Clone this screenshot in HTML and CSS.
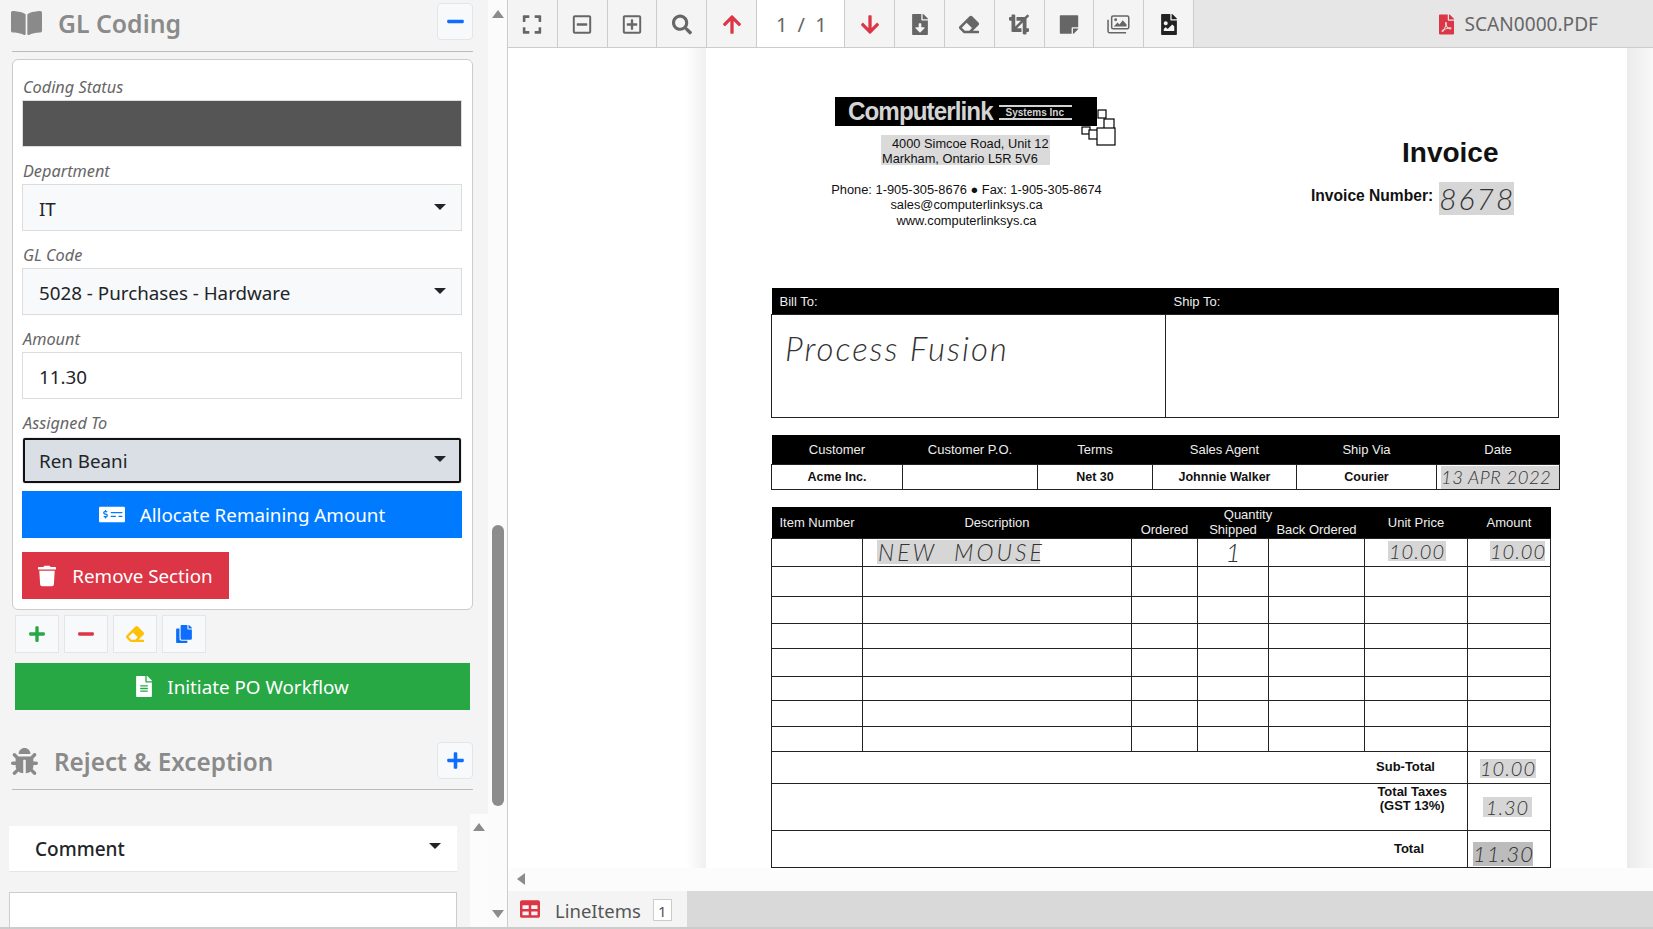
FILE: index.html
```html
<!DOCTYPE html>
<html lang="en">
<head>
    <meta charset="UTF-8">
    <title>Invoice Coding - SCAN0000.PDF</title>
    <link rel="stylesheet" href="styles.css">
</head>
<body>
<div class="app">
    <aside class="sidebar">
        <div class="side-main">
            <div class="section-head">
                <div class="section-title">
                    <svg class="ico-book" viewBox="0 0 576 512"><path d="M542.22 32.05c-54.8 3.11-163.72 14.43-230.96 55.59-4.64 2.84-7.27 7.89-7.27 13.17v363.87c0 11.55 12.63 18.85 23.28 13.49 69.18-34.82 169.23-44.32 218.7-46.92 16.89-.89 30.02-14.43 30.02-30.66V62.75c.01-17.71-15.35-31.74-33.77-30.7zM264.73 87.64C197.5 46.48 88.58 35.17 33.78 32.05 15.36 31.01 0 45.04 0 62.75V400.6c0 16.24 13.13 29.78 30.02 30.66 49.49 2.6 149.59 12.11 218.77 46.95 10.62 5.35 23.21-1.94 23.21-13.46V100.63c0-5.29-2.62-10.14-7.27-12.99z"/></svg>
                    <span>GL Coding</span>
                </div>
                <button class="toggle-btn">
                    <svg class="ico-toggle" viewBox="0 0 448 512"><path d="M416 208H32c-17.67 0-32 14.33-32 32v32c0 17.67 14.33 32 32 32h384c17.67 0 32-14.33 32-32v-32c0-17.67-14.33-32-32-32z"/></svg>
                </button>
            </div>

            <div class="card">
                <label class="field-label">Coding Status</label>
                <div class="status-bar"></div>

                <label class="field-label">Department</label>
                <div class="select-box"><span>IT</span><i class="caret"></i></div>

                <label class="field-label">GL Code</label>
                <div class="select-box"><span>5028 - Purchases - Hardware</span><i class="caret"></i></div>

                <label class="field-label">Amount</label>
                <div class="text-box">11.30</div>

                <label class="field-label assigned">Assigned To</label>
                <div class="select-box focused"><span>Ren Beani</span><i class="caret"></i></div>

                <button class="action-btn blue allocate">
                    <svg class="ico-money" viewBox="0 0 640 512"><path d="M608 64H32C14.33 64 0 78.33 0 96v320c0 17.67 14.33 32 32 32h576c17.67 0 32-14.33 32-32V96c0-17.67-14.33-32-32-32zM176 327.88V344c0 4.42-3.58 8-8 8h-16c-4.42 0-8-3.58-8-8v-16.29c-11.29-.58-22.27-4.52-31.37-11.35-3.9-2.93-4.1-8.77-.57-12.14l11.75-11.21c2.77-2.64 6.89-2.76 10.13-.73 3.87 2.42 8.26 3.72 12.82 3.72h28.11c6.5 0 11.8-5.92 11.8-13.19 0-5.95-3.61-11.19-8.77-12.73l-45-13.5c-18.59-5.58-31.58-23.42-31.58-43.39 0-24.52 19.05-44.44 42.67-45.07V152c0-4.42 3.58-8 8-8h16c4.42 0 8 3.58 8 8v16.29c11.29.58 22.27 4.51 31.37 11.35 3.9 2.93 4.1 8.77.57 12.14l-11.75 11.21c-2.77 2.64-6.89 2.76-10.13.73-3.87-2.43-8.26-3.72-12.82-3.72h-28.11c-6.5 0-11.8 5.92-11.8 13.19 0 5.95 3.61 11.19 8.77 12.73l45 13.5c18.59 5.58 31.58 23.42 31.58 43.39 0 24.53-19.05 44.44-42.67 45.07zM416 312c0 4.42-3.58 8-8 8H296c-4.42 0-8-3.58-8-8v-16c0-4.42 3.58-8 8-8h112c4.42 0 8 3.58 8 8v16zm160 0c0 4.42-3.58 8-8 8h-80c-4.42 0-8-3.58-8-8v-16c0-4.42 3.58-8 8-8h80c4.42 0 8 3.58 8 8v16zm0-96c0 4.42-3.58 8-8 8H296c-4.42 0-8-3.58-8-8v-16c0-4.42 3.58-8 8-8h272c4.42 0 8 3.58 8 8v16z"/></svg>
                    Allocate Remaining Amount
                </button>
                <button class="action-btn red remove">
                    <svg class="ico-trash" viewBox="0 0 448 512"><path d="M432 32H312l-9.4-18.7A24 24 0 0 0 281.1 0H166.8a23.72 23.72 0 0 0-21.4 13.3L136 32H16A16 16 0 0 0 0 48v32a16 16 0 0 0 16 16h416a16 16 0 0 0 16-16V48a16 16 0 0 0-16-16zM53.2 467a48 48 0 0 0 47.9 45h245.8a48 48 0 0 0 47.9-45L416 128H32z"/></svg>
                    Remove Section
                </button>
            </div>

            <div class="mini-tools">
                <button class="mini-btn"><svg class="ico-mini green" viewBox="0 0 448 512"><path d="M416 208H272V64c0-17.67-14.33-32-32-32h-32c-17.67 0-32 14.33-32 32v144H32c-17.67 0-32 14.33-32 32v32c0 17.67 14.33 32 32 32h144v144c0 17.67 14.33 32 32 32h32c17.67 0 32-14.33 32-32V304h144c17.67 0 32-14.33 32-32v-32c0-17.67-14.33-32-32-32z"/></svg></button>
                <button class="mini-btn"><svg class="ico-mini crimson" viewBox="0 0 448 512"><path d="M416 208H32c-17.67 0-32 14.33-32 32v32c0 17.67 14.33 32 32 32h384c17.67 0 32-14.33 32-32v-32c0-17.67-14.33-32-32-32z"/></svg></button>
                <button class="mini-btn"><svg class="ico-mini amber" viewBox="0 0 512 512"><path d="M497.941 273.941c18.745-18.745 18.745-49.137 0-67.882l-160-160c-18.745-18.745-49.136-18.746-67.883 0l-256 256c-18.745 18.745-18.745 49.137 0 67.882l96 96A48.004 48.004 0 0 0 144 480h356c6.627 0 12-5.373 12-12v-40c0-6.627-5.373-12-12-12H355.883l142.058-142.059zm-302.627-62.627l137.373 137.373L265.373 416H150.628l-80-80 124.686-124.686z"/></svg></button>
                <button class="mini-btn"><svg class="ico-mini azure" viewBox="0 0 448 512"><path d="M320 448v40c0 13.255-10.745 24-24 24H24c-13.255 0-24-10.745-24-24V120c0-13.255 10.745-24 24-24h72v296c0 30.879 25.121 56 56 56h168zm0-344V0H152c-13.255 0-24 10.745-24 24v368c0 13.255 10.745 24 24 24h272c13.255 0 24-10.745 24-24V128H344c-13.2 0-24-10.8-24-24zm120.971-31.029L375.029 7.029A24 24 0 0 0 358.059 0H352v96h96v-6.059a24 24 0 0 0-7.029-16.97z"/></svg></button>
            </div>

            <button class="action-btn po-btn">
                <svg class="ico-file" viewBox="0 0 384 512"><path d="M224 136V0H24C10.7 0 0 10.7 0 24v464c0 13.3 10.7 24 24 24h336c13.3 0 24-10.7 24-24V160H248c-13.2 0-24-10.8-24-24zm64 236c0 6.6-5.4 12-12 12H108c-6.6 0-12-5.4-12-12v-8c0-6.6 5.4-12 12-12h168c6.6 0 12 5.4 12 12v8zm0-64c0 6.6-5.4 12-12 12H108c-6.6 0-12-5.4-12-12v-8c0-6.6 5.4-12 12-12h168c6.6 0 12 5.4 12 12v8zm0-72v8c0 6.6-5.4 12-12 12H108c-6.6 0-12-5.4-12-12v-8c0-6.6 5.4-12 12-12h168c6.6 0 12 5.4 12 12zm96-114.1v6.1H256V0h6.1c6.4 0 12.5 2.5 17 7l97.9 98c4.5 4.5 7 10.6 7 16.9z"/></svg>
                Initiate PO Workflow
            </button>

            <div class="section-head second">
                <div class="section-title">
                    <svg class="ico-bug" viewBox="0 0 512 512"><path d="M511.988 288.9c-.478 17.43-15.217 31.1-32.653 31.1H424v16c0 21.864-4.882 42.584-13.6 61.145l60.228 60.228c12.496 12.497 12.496 32.758 0 45.255-12.498 12.497-32.759 12.496-45.256 0l-54.736-54.736C345.886 467.965 314.351 480 280 480V236c0-6.627-5.373-12-12-12h-24c-6.627 0-12 5.373-12 12v244c-34.351 0-65.886-12.035-90.636-32.108l-54.736 54.736c-12.498 12.497-32.759 12.496-45.256 0-12.496-12.497-12.496-32.758 0-45.255l60.228-60.228C92.882 378.584 88 357.864 88 336v-16H32.666C15.23 320 .491 306.33.013 288.9-.484 270.816 14.028 256 32 256h56v-58.745l-46.628-46.628c-12.496-12.497-12.496-32.758 0-45.255 12.498-12.497 32.758-12.497 45.256 0L141.255 160h229.489l54.627-54.627c12.498-12.497 32.758-12.497 45.256 0 12.496 12.497 12.496 32.758 0 45.255L424 197.255V256h56c17.972 0 32.484 14.816 31.988 32.9zM257 0c-61.856 0-112 50.144-112 112h224C369 50.144 318.856 0 257 0z"/></svg>
                    <span>Reject &amp; Exception</span>
                </div>
                <button class="toggle-btn">
                    <svg class="ico-toggle" viewBox="0 0 448 512"><path d="M416 208H272V64c0-17.67-14.33-32-32-32h-32c-17.67 0-32 14.33-32 32v144H32c-17.67 0-32 14.33-32 32v32c0 17.67 14.33 32 32 32h144v144c0 17.67 14.33 32 32 32h32c17.67 0 32-14.33 32-32V304h144c17.67 0 32-14.33 32-32v-32c0-17.67-14.33-32-32-32z"/></svg>
                </button>
            </div>

            <div class="lower">
                <div class="lower-main">
                    <div class="comment-select"><span>Comment</span><i class="caret"></i></div>
                    <div class="comment-box"></div>
                </div>
                <div class="lower-scroll"><i class="arrow-up"></i></div>
            </div>
        </div>

        <div class="side-scroll">
            <i class="arrow-up"></i>
            <div class="thumb"></div>
            <i class="arrow-down"></i>
        </div>
    </aside>

    <main class="viewer">
        <div class="toolbar">
            <button class="tool-btn"><svg class="ico-tool grey" viewBox="0 0 448 512"><path d="M0 180V56c0-13.3 10.7-24 24-24h124c6.6 0 12 5.4 12 12v40c0 6.6-5.4 12-12 12H64v84c0 6.6-5.4 12-12 12H12c-6.6 0-12-5.4-12-12zM288 44v40c0 6.6 5.4 12 12 12h84v84c0 6.6 5.4 12 12 12h40c6.6 0 12-5.4 12-12V56c0-13.3-10.7-24-24-24H300c-6.6 0-12 5.4-12 12zm148 276h-40c-6.6 0-12 5.4-12 12v84h-84c-6.6 0-12 5.4-12 12v40c0 6.6 5.4 12 12 12h124c13.3 0 24-10.7 24-24V332c0-6.6-5.4-12-12-12zM160 468v-40c0-6.6-5.4-12-12-12H64v-84c0-6.6-5.4-12-12-12H12c-6.6 0-12 5.4-12 12v124c0 13.3 10.7 24 24 24h124c6.6 0 12-5.4 12-12z"/></svg></button>
            <button class="tool-btn"><svg class="ico-tool grey" viewBox="0 0 448 512"><path d="M108 284c-6.6 0-12-5.4-12-12v-32c0-6.6 5.4-12 12-12h232c6.6 0 12 5.4 12 12v32c0 6.6-5.4 12-12 12H108zM448 80v352c0 26.5-21.5 48-48 48H48c-26.5 0-48-21.5-48-48V80c0-26.5 21.5-48 48-48h352c26.5 0 48 21.5 48 48zm-48 346V86c0-3.3-2.7-6-6-6H54c-3.3 0-6 2.7-6 6v340c0 3.3 2.7 6 6 6h340c3.3 0 6-2.7 6-6z"/></svg></button>
            <button class="tool-btn"><svg class="ico-tool grey" viewBox="0 0 448 512"><path d="M352 240v32c0 6.6-5.4 12-12 12h-88v88c0 6.6-5.4 12-12 12h-32c-6.6 0-12-5.4-12-12v-88h-88c-6.6 0-12-5.4-12-12v-32c0-6.6 5.4-12 12-12h88v-88c0-6.6 5.4-12 12-12h32c6.6 0 12 5.4 12 12v88h88c6.6 0 12 5.4 12 12zm96-160v352c0 26.5-21.5 48-48 48H48c-26.5 0-48-21.5-48-48V80c0-26.5 21.5-48 48-48h352c26.5 0 48 21.5 48 48zm-48 346V86c0-3.3-2.7-6-6-6H54c-3.3 0-6 2.7-6 6v340c0 3.3 2.7 6 6 6h340c3.3 0 6-2.7 6-6z"/></svg></button>
            <button class="tool-btn"><svg class="ico-tool grey" viewBox="0 0 512 512"><path d="M505 442.7L405.3 343c-4.5-4.5-10.6-7-17-7H372c27.6-35.3 44-79.7 44-128C416 93.1 322.9 0 208 0S0 93.1 0 208s93.1 208 208 208c48.3 0 92.7-16.4 128-44v16.3c0 6.4 2.5 12.5 7 17l99.7 99.7c9.4 9.4 24.6 9.4 33.9 0l28.3-28.3c9.4-9.4 9.4-24.6.1-34zM208 336c-70.7 0-128-57.2-128-128 0-70.7 57.2-128 128-128 70.7 0 128 57.2 128 128 0 70.7-57.2 128-128 128z"/></svg></button>
            <button class="tool-btn"><svg class="ico-tool crimson" viewBox="0 0 448 512"><path d="M34.9 289.5l-22.2-22.2c-9.4-9.4-9.4-24.6 0-33.9L207 39c9.4-9.4 24.6-9.4 33.9 0l194.3 194.3c9.4 9.4 9.4 24.6 0 33.9L413 289.4c-9.5 9.5-25 9.3-34.3-.4L264 168.6V456c0 13.3-10.7 24-24 24h-32c-13.3 0-24-10.7-24-24V168.6L69.2 289.1c-9.3 9.8-24.8 10-34.3.4z"/></svg></button>
            <div class="pager">1 / 1</div>
            <button class="tool-btn"><svg class="ico-tool crimson" viewBox="0 0 448 512"><path d="M413.1 222.5l22.2 22.2c9.4 9.4 9.4 24.6 0 33.9L241 473c-9.4 9.4-24.6 9.4-33.9 0L12.7 278.6c-9.4-9.4-9.4-24.6 0-33.9l22.2-22.2c9.5-9.5 25-9.3 34.3.4L184 343.4V56c0-13.3 10.7-24 24-24h32c13.3 0 24 10.7 24 24v287.4l114.8-120.5c9.3-9.8 24.8-10 34.3-.4z"/></svg></button>
            <button class="tool-btn"><svg class="ico-tool grey" viewBox="0 0 384 512"><path d="M224 136V0H24C10.7 0 0 10.7 0 24v464c0 13.3 10.7 24 24 24h336c13.3 0 24-10.7 24-24V160H248c-13.2 0-24-10.8-24-24zm76.45 211.36l-96.42 95.7c-6.65 6.61-17.39 6.61-24.04 0l-96.42-95.7C73.42 337.29 80.54 320 94.82 320H160v-80c0-8.84 7.16-16 16-16h32c8.84 0 16 7.16 16 16v80h65.18c14.28 0 21.4 17.29 11.27 27.36zM377 105L279.1 7c-4.5-4.5-10.6-7-17-7H256v128h128v-6.1c0-6.3-2.5-12.4-7-16.9z"/></svg></button>
            <button class="tool-btn"><svg class="ico-tool grey" viewBox="0 0 512 512"><path d="M497.941 273.941c18.745-18.745 18.745-49.137 0-67.882l-160-160c-18.745-18.745-49.136-18.746-67.883 0l-256 256c-18.745 18.745-18.745 49.137 0 67.882l96 96A48.004 48.004 0 0 0 144 480h356c6.627 0 12-5.373 12-12v-40c0-6.627-5.373-12-12-12H355.883l142.058-142.059zm-302.627-62.627l137.373 137.373L265.373 416H150.628l-80-80 124.686-124.686z"/></svg></button>
            <button class="tool-btn"><svg class="ico-tool grey" viewBox="0 0 512 512"><path d="M488 352h-40V109.25l59.31-59.31c6.25-6.25 6.25-16.38 0-22.63L484.69 4.69c-6.25-6.25-16.38-6.25-22.63 0L402.75 64H192v96h114.75L160 306.75V24c0-13.26-10.75-24-24-24H88C74.75 0 64 10.74 64 24v40H24C10.75 64 0 74.74 0 88v48c0 13.25 10.75 24 24 24h40v264c0 13.25 10.75 24 24 24h232v-96H205.25L352 205.25V488c0 13.25 10.75 24 24 24h48c13.25 0 24-10.75 24-24v-40h40c13.25 0 24-10.75 24-24v-48c0-13.26-10.75-24-24-24z"/></svg></button>
            <button class="tool-btn"><svg class="ico-tool grey" viewBox="0 0 448 512"><path d="M312 320h136V56c0-13.3-10.7-24-24-24H24C10.7 32 0 42.7 0 56v400c0 13.3 10.7 24 24 24h264V344c0-13.2 10.8-24 24-24zm129 55l-98 98c-4.5 4.5-10.6 7-17 7h-6V352h128v6.1c0 6.3-2.5 12.4-7 16.9z"/></svg></button>
            <button class="tool-btn"><svg class="ico-images" viewBox="0 0 24 20"><rect x="4.8" y="1" width="18" height="13.4" rx="1.5" fill="none" stroke="#666" stroke-width="1.6"/><path d="M1 5v12c0 1 .7 1.8 1.8 1.8H20" fill="none" stroke="#666" stroke-width="1.6"/><circle cx="9" cy="5" r="1.5" fill="#666"/><path d="M7 12l4-4 2 2 3.500-4.500L20.500 10v2z" fill="#666"/></svg></button>
            <button class="tool-btn"><svg class="ico-tool dark" viewBox="0 0 384 512"><path d="M384 121.941V128H256V0h6.059a24 24 0 0 1 16.97 7.029l97.941 97.941a24.002 24.002 0 0 1 7.03 16.971zM248 160c-13.2 0-24-10.8-24-24V0H24C10.745 0 0 10.745 0 24v464c0 13.255 10.745 24 24 24h336c13.255 0 24-10.745 24-24V160H248zm-135.455 16c26.51 0 48 21.49 48 48s-21.49 48-48 48-48-21.49-48-48 21.491-48 48-48zm208 240h-256l.485-48.485L104.545 328c4.686-4.686 11.799-4.201 16.485.485L160.545 368 264.06 264.485c4.686-4.686 12.284-4.686 16.97 0L320.545 304v112z"/></svg></button>
            <div class="file-name">
                <svg class="ico-pdf" viewBox="0 0 384 512"><path d="M181.9 256.1c-5-16-4.9-46.9-2-46.9 8.4 0 7.6 36.9 2 46.9zm-1.7 47.2c-7.7 20.2-17.3 43.3-28.4 62.7 18.3-7 39-17.2 62.9-21.9-12.7-9.6-24.9-23.4-34.5-40.8zM86.1 428.1c0 .8 13.2-5.4 34.9-40.2-6.7 6.3-29.1 24.5-34.9 40.2zM248 160h136v328c0 13.3-10.7 24-24 24H24c-13.3 0-24-10.7-24-24V24C0 10.7 10.7 0 24 0h200v136c0 13.2 10.8 24 24 24zm-8 171.8c-20-12.2-33.3-29-42.7-53.8 4.5-18.5 11.6-46.6 6.2-64.2-4.7-29.4-42.4-26.5-47.8-6.8-5 18.3-.4 44.1 8.1 77-11.6 27.6-28.7 64.6-40.8 85.8-.1 0-.1.1-.2.1-27.1 13.9-73.6 44.5-54.5 68 5.6 6.9 16 10 21.5 10 17.9 0 35.7-18 61.1-61.8 25.8-8.5 54.1-19.1 79-23.2 21.7 11.8 47.1 19.5 64 19.5 29.2 0 31.2-32 19.7-43.4-13.9-13.6-54.3-9.7-73.6-7.2zM377 105L279 7c-4.5-4.5-10.6-7-17-7h-6v128h128v-6.1c0-6.3-2.5-12.4-7-16.9zm-74.1 255.3c4.1-2.7-2.5-11.9-42.8-9 37.1 15.8 42.8 9 42.8 9z"/></svg>
                <span>SCAN0000.PDF</span>
            </div>
        </div>

        <div class="canvas">
            <div class="gutter-left"></div>
            <div class="page">
                <div class="doc-head">
                    <div class="company">
                        <div class="logo">
                            <span class="logo-name">Computerlink</span>
                            <span class="logo-sub">Systems Inc</span>
                            <svg class="logo-stack" viewBox="0 0 44 46"><rect x="26" y="10" width="8" height="8" fill="#fff" stroke="#000" stroke-width="1.2"/><rect x="32" y="19" width="10" height="10" fill="#fff" stroke="#000" stroke-width="1.2"/><rect x="10" y="27" width="8" height="7" fill="#fff" stroke="#000" stroke-width="1.2"/><rect x="17" y="30" width="9" height="9" fill="#fff" stroke="#000" stroke-width="1.2"/><rect x="25" y="28" width="18" height="17" fill="#fff" stroke="#000" stroke-width="1.2"/></svg>
                        </div>
                        <div class="address"><span class="address-first">4000 Simcoe Road, Unit 12</span><br>Markham, Ontario L5R 5V6</div>
                        <div class="contact">Phone: 1-905-305-8676 ● Fax: 1-905-305-8674<br>sales@computerlinksys.ca<br>www.computerlinksys.ca</div>
                    </div>
                    <div class="invoice-info">
                        <div class="invoice-title">Invoice</div>
                        <div class="invoice-number">
                            <span class="number-label">Invoice Number:</span>
                            <span class="hand hl hl-number">8678</span>
                        </div>
                    </div>
                </div>

                <table class="bill-table">
                    <tr><th>Bill To:</th><th>Ship To:</th></tr>
                    <tr><td><span class="hand bill-name">Process Fusion</span></td><td></td></tr>
                </table>

                <table class="terms-table">
                    <colgroup><col class="t1"><col class="t2"><col class="t3"><col class="t4"><col class="t5"><col class="t6"></colgroup>
                    <tr><th>Customer</th><th>Customer P.O.</th><th>Terms</th><th>Sales Agent</th><th>Ship Via</th><th>Date</th></tr>
                    <tr><td>Acme Inc.</td><td></td><td>Net 30</td><td>Johnnie Walker</td><td>Courier</td><td class="date-cell"><span class="hand hl hl-date">13 APR 2022</span></td></tr>
                </table>

                <table class="items-table">
                    <colgroup><col class="i1"><col class="i2"><col class="i3"><col class="i4"><col class="i5"><col class="i6"><col class="i7"></colgroup>
                    <tr class="head-a">
                        <th rowspan="2">Item Number</th><th rowspan="2">Description</th><th colspan="3">Quantity</th><th rowspan="2">Unit Price</th><th rowspan="2">Amount</th>
                    </tr>
                    <tr class="head-b"><th>Ordered</th><th>Shipped</th><th>Back Ordered</th></tr>
                    <tr class="r1">
                        <td></td><td><span class="hand hl hl-desc">NEW &nbsp;MOUSE</span></td><td></td><td class="qty"><span class="hand">1</span></td><td></td>
                        <td><span class="hand hl hl-unit">10.00</span></td><td><span class="hand hl hl-amount">10.00</span></td>
                    </tr>
                    <tr class="r2"><td></td><td></td><td></td><td></td><td></td><td></td><td></td></tr>
                    <tr class="r3"><td></td><td></td><td></td><td></td><td></td><td></td><td></td></tr>
                    <tr class="r4"><td></td><td></td><td></td><td></td><td></td><td></td><td></td></tr>
                    <tr class="r5"><td></td><td></td><td></td><td></td><td></td><td></td><td></td></tr>
                    <tr class="r6"><td></td><td></td><td></td><td></td><td></td><td></td><td></td></tr>
                    <tr class="r7"><td></td><td></td><td></td><td></td><td></td><td></td><td></td></tr>
                    <tr class="r8"><td></td><td></td><td></td><td></td><td></td><td></td><td></td></tr>
                    <tr class="total-sub"><td colspan="6" class="sum-label">Sub-Total</td><td><span class="hand hl hl-sub">10.00</span></td></tr>
                    <tr class="total-tax"><td colspan="6" class="sum-label"><span class="tax-label">Total Taxes<br>(GST 13%)</span></td><td><span class="hand hl hl-tax">1.30</span></td></tr>
                    <tr class="total-all"><td colspan="6" class="sum-label">Total</td><td><span class="hand hl hl-total">11.30</span></td></tr>
                </table>
            </div>
            <div class="gutter-right"></div>
        </div>

        <div class="h-scroll"><i class="arrow-left"></i></div>

        <div class="tabbar">
            <div class="tab">
                <svg class="ico-table" viewBox="0 0 512 512"><path d="M464 32H48C21.49 32 0 53.49 0 80v352c0 26.51 21.49 48 48 48h416c26.51 0 48-21.49 48-48V80c0-26.51-21.49-48-48-48zM224 416H64v-96h160v96zm0-160H64v-96h160v96zm224 160H288v-96h160v96zm0-160H288v-96h160v96z"/></svg>
                <span>LineItems</span>
                <span class="tab-count">1</span>
            </div>
        </div>
    </main>
</div>
</body>
</html>
```

FILE: styles.css
```css
* {
    box-sizing: border-box;
}
body {
    margin: 0;
    width: 1653px;
    height: 929px;
    overflow: hidden;
    font-family: "Noto Sans", "Open Sans", sans-serif;
    background-color: #fff;
    color: #212529;
}
button {
    font-family: inherit;
    cursor: pointer;
}
.app {
    display: flex;
    height: 929px;
    border-bottom: 2px solid #ccc;
}

/* left panel */
.sidebar {
    display: flex;
    width: 508px;
    flex: none;
    height: 927px;
    overflow: hidden;
    background-color: #f4f4f4;
    border-right: 1px solid #ccc;
}
.side-main {
    width: 488px;
    flex: none;
}
.section-head {
    display: flex;
    justify-content: space-between;
    height: 52px;
    margin: 0 15px 0 12px;
    padding-top: 3px;
    border-bottom: 1px solid #bbb;
}
.section-head.second {
    height: 51px;
    margin-top: 29px;
}
.section-title {
    display: flex;
    align-items: center;
    height: 40px;
    margin-left: -1px;
    color: #8a8a8a;
    font-size: 24.800px;
    font-weight: 600;
}
.section-head.second .section-title {
    height: 39px;
    font-size: 24.300px;
}
.ico-book {
    width: 31px;
    height: 28px;
    margin-right: 16px;
    fill: #8a8a8a;
}
.ico-bug {
    width: 27px;
    height: 27px;
    margin-right: 16px;
    fill: #8a8a8a;
}
.toggle-btn {
    display: flex;
    align-items: center;
    justify-content: center;
    width: 36px;
    height: 37px;
    padding: 0;
    background-color: #f8f9fa;
    border: 1px solid #e3e5e8;
    border-radius: 4px;
}
.ico-toggle {
    width: 17px;
    height: 19px;
    fill: #0d6efd;
}
.card {
    height: 551px;
    margin: 7px 15px 0 12px;
    padding: 16px 10px 0 9px;
    background-color: #fff;
    border: 1px solid #ccc;
    border-radius: 6px;
}
.field-label {
    display: block;
    height: 24px;
    padding-left: 1px;
    font-size: 16.300px;
    font-style: italic;
    line-height: 22px;
    color: #666;
}
.field-label.assigned {
    height: 25px;
}
.status-bar,
.select-box,
.text-box {
    height: 47px;
    margin-bottom: 13px;
}
.status-bar {
    background-color: #555;
    border: 1px solid #ddd;
}
.select-box,
.text-box {
    display: flex;
    align-items: center;
    justify-content: space-between;
    padding: 3px 16px 0;
    font-size: 18.800px;
    border: 1px solid #dcdcdc;
}
.select-box {
    background-color: #f8f9fa;
    padding-right: 15px;
}
.text-box {
    background-color: #fff;
}
.select-box.focused {
    margin-bottom: 0;
    padding-top: 1px;
    background-color: #dadfe6;
    border: 1px solid #e9ecef;
    border-radius: 3px;
    outline: 2px solid #111;
    outline-offset: -3px;
}
.caret {
    width: 0;
    height: 0;
    margin-top: -5px;
    border-left: 6px solid transparent;
    border-right: 6px solid transparent;
    border-top: 6px solid #212529;
}
.action-btn {
    display: flex;
    align-items: center;
    justify-content: center;
    height: 47px;
    padding: 0;
    color: #fff;
    font-size: 18.800px;
    border: none;
}
.blue {
    background-color: #007bff;
}
.red {
    background-color: #dc3545;
}
.allocate {
    width: 100%;
    margin-top: 7px;
}
.remove {
    width: 207px;
    margin-top: 14px;
}
.ico-money {
    width: 26px;
    height: 23px;
    margin-right: 15px;
    fill: #fff;
}
.ico-trash {
    width: 18px;
    height: 22px;
    margin-right: 16px;
    fill: #fff;
}
.mini-tools {
    display: flex;
    gap: 5px;
    margin: 5px 0 0 15px;
}
.mini-btn {
    display: flex;
    align-items: center;
    justify-content: center;
    width: 44px;
    height: 38px;
    padding: 0;
    background-color: #f8f9fa;
    border: 1px solid #e3e5e8;
}
.ico-mini {
    width: 18px;
    height: 18px;
}
.green {
    fill: #28a745;
}
.crimson {
    fill: #dc3545;
}
.amber {
    fill: #ffc107;
}
.azure {
    fill: #0d6efd;
}
.po-btn {
    width: 455px;
    margin: 10px 0 0 15px;
    background-color: #28a745;
}
.ico-file {
    width: 16px;
    height: 21px;
    margin-right: 15px;
    fill: #fff;
}
.lower {
    display: flex;
    height: 140px;
    margin-top: 24px;
}
.lower-main {
    width: 470px;
    padding: 12px 13px 0 9px;
}
.comment-select {
    display: flex;
    align-items: center;
    justify-content: space-between;
    height: 46px;
    padding: 0 16px 0 26px;
    font-size: 19px;
    font-weight: 500;
    background-color: #fff;
    border-bottom: 1px solid #e6e6e6;
}
.comment-box {
    height: 60px;
    margin-top: 20px;
    background-color: #fff;
    border: 1px solid #ccc;
}
.lower-scroll {
    width: 18px;
    padding: 9px 3px 0;
    background-color: #fcfcfc;
}
.arrow-up,
.arrow-down {
    display: block;
    width: 0;
    height: 0;
    border-left: 6px solid transparent;
    border-right: 6px solid transparent;
}
.arrow-up {
    border-bottom: 8px solid #8c8c8c;
}
.arrow-down {
    margin-top: 104px;
    border-top: 8px solid #8c8c8c;
}
.side-scroll {
    width: 19px;
    flex: none;
    padding: 10px 3px 0 4px;
    background-color: #fbfbfb;
}
.thumb {
    width: 12px;
    height: 281px;
    margin-top: 507px;
    background-color: #8c8c8c;
    border-radius: 6px;
}

/* viewer */
.viewer {
    display: flex;
    flex-direction: column;
    width: 1145px;
    flex: none;
    height: 927px;
}
.toolbar {
    display: flex;
    height: 48px;
    background-color: #e6e6e6;
    border-bottom: 1px solid #ccc;
}
.tool-btn {
    display: flex;
    align-items: center;
    justify-content: center;
    width: 49.800px;
    flex: none;
    height: 47px;
    padding: 2px 0 0;
    background-color: #f4f4f4;
    border: none;
    border-right: 1px solid #ccc;
}
.ico-tool {
    width: 20px;
    height: 21px;
}
.grey {
    fill: #666;
}
.dark {
    fill: #222;
}
.ico-images {
    width: 23px;
    height: 19px;
}
.pager {
    width: 88.500px;
    flex: none;
    height: 47px;
    padding-left: 19px;
    font-size: 20px;
    line-height: 50px;
    word-spacing: 5px;
    color: #666;
    background-color: #fff;
    border-right: 1px solid #ccc;
}
.file-name {
    display: flex;
    align-items: center;
    gap: 11px;
    margin-left: auto;
    padding: 1px 55px 0 0;
    font-size: 19.100px;
    color: #666;
}
.ico-pdf {
    width: 15px;
    height: 21px;
    fill: #dc3545;
}
.canvas {
    display: flex;
    height: 820px;
    overflow: hidden;
}
.gutter-left {
    width: 198px;
    background: linear-gradient(to right, #fff 90%, #f0f0f0);
}
.gutter-right {
    width: 26px;
    background: linear-gradient(to right, #ebebeb, #f8f8f8);
}
.h-scroll {
    height: 23px;
    padding: 5px 0 0 9px;
    background-color: #fcfcfc;
}
.arrow-left {
    display: block;
    width: 0;
    height: 0;
    border-top: 6px solid transparent;
    border-bottom: 6px solid transparent;
    border-right: 8px solid #8c8c8c;
}
.tabbar {
    height: 36px;
    background-color: #d9d9d9;
}
.tab {
    display: flex;
    align-items: center;
    width: 179px;
    height: 36px;
    padding: 3px 0 0 12px;
    font-size: 18.500px;
    color: #555;
    background-color: #f4f4f4;
}
.ico-table {
    width: 20px;
    height: 22px;
    margin: -3px 15px 0 0;
    fill: #dc3545;
}
.tab-count {
    width: 19px;
    height: 22px;
    margin: -2px 0 0 12px;
    font-size: 15px;
    line-height: 22px;
    text-align: center;
    background-color: #fff;
    border: 1px solid #ccc;
}

/* scanned invoice */
.page {
    width: 921px;
    height: 820px;
    padding-left: 65px;
    overflow: hidden;
    background-color: #fff;
    font-family: "Liberation Sans", Arial, sans-serif;
    color: #111;
}
.doc-head {
    display: flex;
    height: 240px;
}
.company {
    width: 271px;
    margin-left: 60px;
    padding-top: 49px;
}
.logo {
    position: relative;
    display: flex;
    align-items: center;
    width: 262px;
    height: 29px;
    margin-left: 4px;
    padding-left: 13px;
    color: #d4d4d4;
    background-color: #000;
}
.logo-name {
    font-size: 26px;
    font-weight: bold;
    letter-spacing: -1px;
    white-space: nowrap;
    transform: scaleX(.93);
    transform-origin: left;
}
.logo-sub {
    margin: 2px 0 0 -5px;
    padding: 0 8px 0 7px;
    font-size: 10px;
    font-weight: bold;
    white-space: nowrap;
    border-top: 2px solid #d4d4d4;
    border-bottom: 2px solid #d4d4d4;
}
.logo-stack {
    position: absolute;
    left: 237px;
    top: 3px;
    width: 44px;
    height: 46px;
}
.address {
    width: 169px;
    height: 30px;
    margin: 9px 0 0 50px;
    padding: 1px 0 0 1px;
    font-size: 12.800px;
    line-height: 15px;
    white-space: nowrap;
    background-color: #dadada;
}
.address-first {
    padding-left: 10px;
}
.contact {
    margin-top: 17px;
    font-size: 12.850px;
    line-height: 15.300px;
    text-align: center;
    white-space: nowrap;
}
.invoice-info {
    width: 204px;
    margin-left: 209px;
    padding-top: 87px;
}
.invoice-title {
    padding-left: 91px;
    font-size: 28px;
    font-weight: bold;
    line-height: 36px;
    white-space: nowrap;
}
.invoice-number {
    display: flex;
    align-items: center;
    gap: 6px;
    margin-top: 11px;
    font-size: 15.600px;
    font-weight: bold;
    white-space: nowrap;
}
.number-label {
    padding-bottom: 6px;
}
.hand {
    font-family: Lato, "Liberation Serif", serif;
    font-style: italic;
    font-weight: 300;
    color: #333;
}
.hl {
    display: block;
    background-color: #d6d6d6;
    white-space: nowrap;
}
.hl-number {
    width: 75px;
    height: 33px;
    font-size: 30px;
    line-height: 33px;
    letter-spacing: 2px;
    text-align: center;
}
table {
    width: 788px;
    border-collapse: collapse;
    table-layout: fixed;
}
th {
    padding: 0;
    color: #eee;
    font-weight: normal;
    font-size: 13px;
    background-color: #000;
}
td {
    padding: 0;
    border: 1px solid #222;
}
.bill-table {
    margin-bottom: 17px;
}
.bill-table th {
    height: 26px;
    padding: 1px 0 0 8px;
    text-align: left;
}
.bill-table td {
    height: 103px;
    vertical-align: top;
}
.bill-table th:first-child {
    width: 394px;
}
.bill-name {
    display: block;
    margin: 13px 0 0 13px;
    font-size: 33px;
    line-height: 40px;
    letter-spacing: 2px;
}
.terms-table {
    margin-bottom: 17px;
}
.terms-table th {
    height: 30px;
}
.terms-table td {
    height: 25px;
    font-size: 12.500px;
    font-weight: bold;
    text-align: center;
}
.t1 { width: 131px; }
.t2 { width: 135px; }
.t3 { width: 115px; }
.t4 { width: 144px; }
.t5 { width: 140px; }
.t6 { width: 123px; }
.date-cell {
    padding: 0 0 0 4px;
}
.terms-table .hl-date {
    height: 23px;
    font-size: 18.500px;
    line-height: 23px;
    letter-spacing: .5px;
    text-align: left;
}
.items-table {
    width: 779px;
}
.i1 { width: 91px; }
.i2 { width: 269px; }
.i3 { width: 66px; }
.i4 { width: 71px; }
.i5 { width: 96px; }
.i6 { width: 103px; }
.i7 { width: 83px; }
.head-a th {
    height: 15px;
}
.head-b th {
    height: 16px;
    vertical-align: top;
}
.items-table td {
    vertical-align: top;
}
.qty {
    font-size: 26px;
    line-height: 26px;
    text-align: center;
}
.r1 { height: 26px; }
.r2 { height: 30px; }
.r3 { height: 27px; }
.r4 { height: 25px; }
.r5 { height: 28px; }
.r6 { height: 24px; }
.r7 { height: 26px; }
.r8 { height: 25px; }
.total-sub { height: 32px; }
.total-tax { height: 47px; }
.total-all { height: 37px; }
.items-table .sum-label {
    padding: 8px 32px 0 0;
    font-size: 13px;
    font-weight: bold;
    line-height: 14px;
    text-align: right;
}
.total-tax .sum-label {
    padding: 1px 20px 0 0;
}
.tax-label {
    display: inline-block;
    text-align: center;
}
.total-all .sum-label {
    padding: 11px 43px 0 0;
}
.hl-desc {
    width: 163px;
    height: 24px;
    margin: 1px 0 0 14px;
    padding-left: 1px;
    font-size: 23px;
    line-height: 24px;
    letter-spacing: 3px;
}
.hl-unit,
.hl-amount {
    height: 20px;
    font-size: 20px;
    line-height: 20px;
    letter-spacing: 1px;
    text-align: center;
}
.hl-unit {
    width: 58px;
    margin: 2px 0 0 23px;
}
.hl-amount {
    width: 55px;
    margin: 2px 0 0 22px;
}
.hl-sub,
.hl-tax,
.hl-total {
    font-size: 20px;
    text-align: center;
    letter-spacing: 1px;
}
.hl-sub {
    width: 56px;
    height: 19px;
    margin: 7px 0 0 12px;
    line-height: 19px;
}
.hl-tax {
    width: 49px;
    height: 20px;
    margin: 13px 0 0 15px;
    line-height: 20px;
}
.hl-total {
    width: 60px;
    height: 24px;
    margin: 11px 0 0 5px;
    font-size: 22px;
    line-height: 24px;
    background-color: #bcbcbc;
}
```
